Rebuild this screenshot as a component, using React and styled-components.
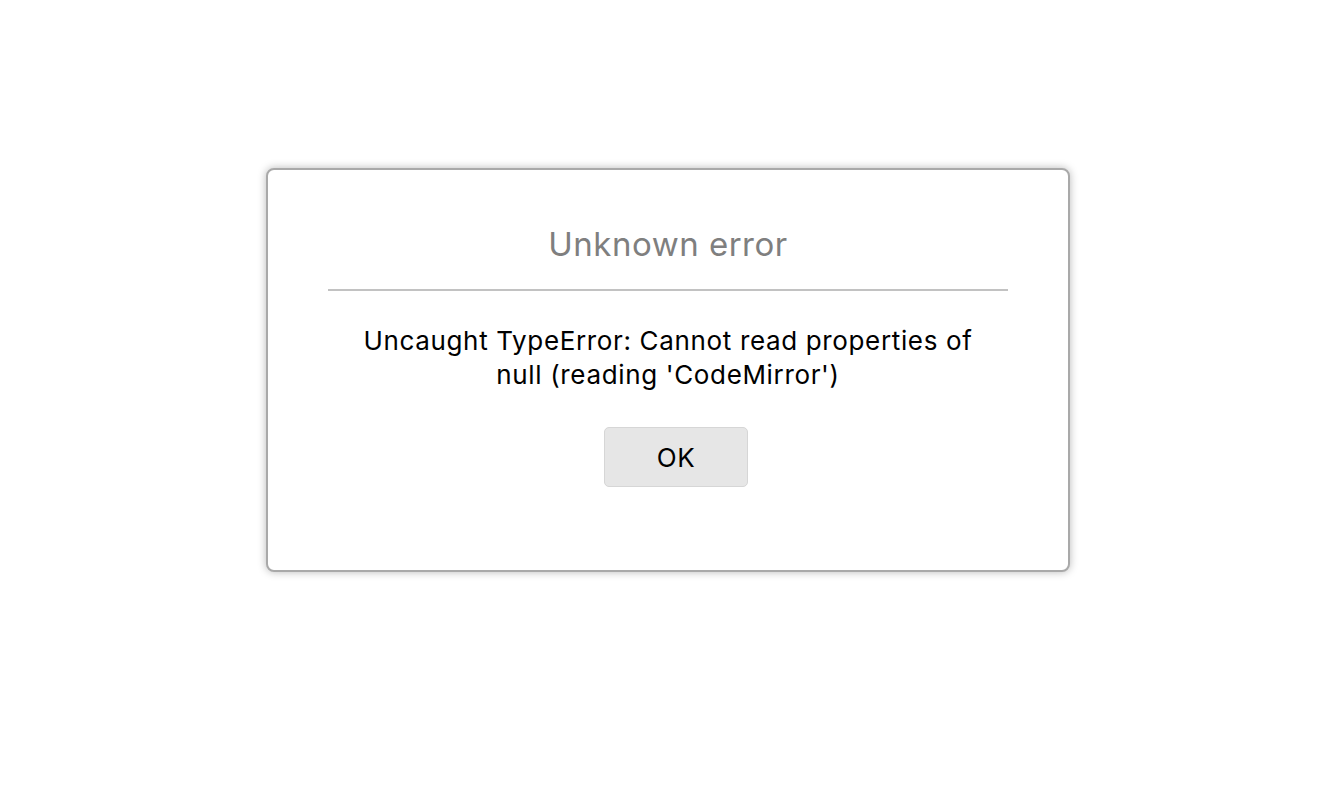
import React from "react";
import styled, { createGlobalStyle } from "styled-components";

const Global = createGlobalStyle`
  html, body { margin: 0; padding: 0; background: #ffffff; }
  body { font-family: Inter, "Liberation Sans", Arial, sans-serif; }
`;

const Page = styled.div`
  display: flex;
  justify-content: center;
  align-items: flex-start;
  padding: 168px 6px 0 0;
  min-height: 786px;
  box-sizing: border-box;
`;

const Dialog = styled.div`
  width: 804px;
  box-sizing: border-box;
  border: 2px solid #a9a9a9;
  border-radius: 8px;
  background: #ffffff;
  box-shadow: 0 0 8px rgba(0, 0, 0, 0.28);
  padding: 54px 60px 83px;
  display: flex;
  flex-direction: column;
  align-items: center;
`;

const Title = styled.h2`
  margin: 0;
  font-weight: 400;
  font-size: 33px;
  letter-spacing: 0.5px;
  line-height: 40px;
  color: #7f7f7f;
  text-align: center;
`;

const Divider = styled.hr`
  align-self: stretch;
  margin: 25px 0 0;
  border: none;
  height: 2px;
  background: #c2c2c2;
`;

const Message = styled.p`
  margin: 33px 0 0;
  font-size: 26px;
  letter-spacing: 0.65px;
  line-height: 34px;
  color: #000000;
  text-align: center;
  max-width: 640px;
`;

const Button = styled.button`
  margin: 35px 0 0 16px;
  width: 144px;
  height: 60px;
  box-sizing: border-box;
  border: 1px solid #d6d6d6;
  border-radius: 5px;
  background: #e6e6e6;
  font-family: inherit;
  font-size: 26px;
  letter-spacing: 0.5px;
  color: #000000;
  cursor: pointer;
`;

export default function App() {
  return (
    <>
      <Global />
      <Page>
        <Dialog>
          <Title>Unknown error</Title>
          <Divider />
          <Message>
            Uncaught TypeError: Cannot read properties of null (reading 'CodeMirror')
          </Message>
          <Button>OK</Button>
        </Dialog>
      </Page>
    </>
  );
}
